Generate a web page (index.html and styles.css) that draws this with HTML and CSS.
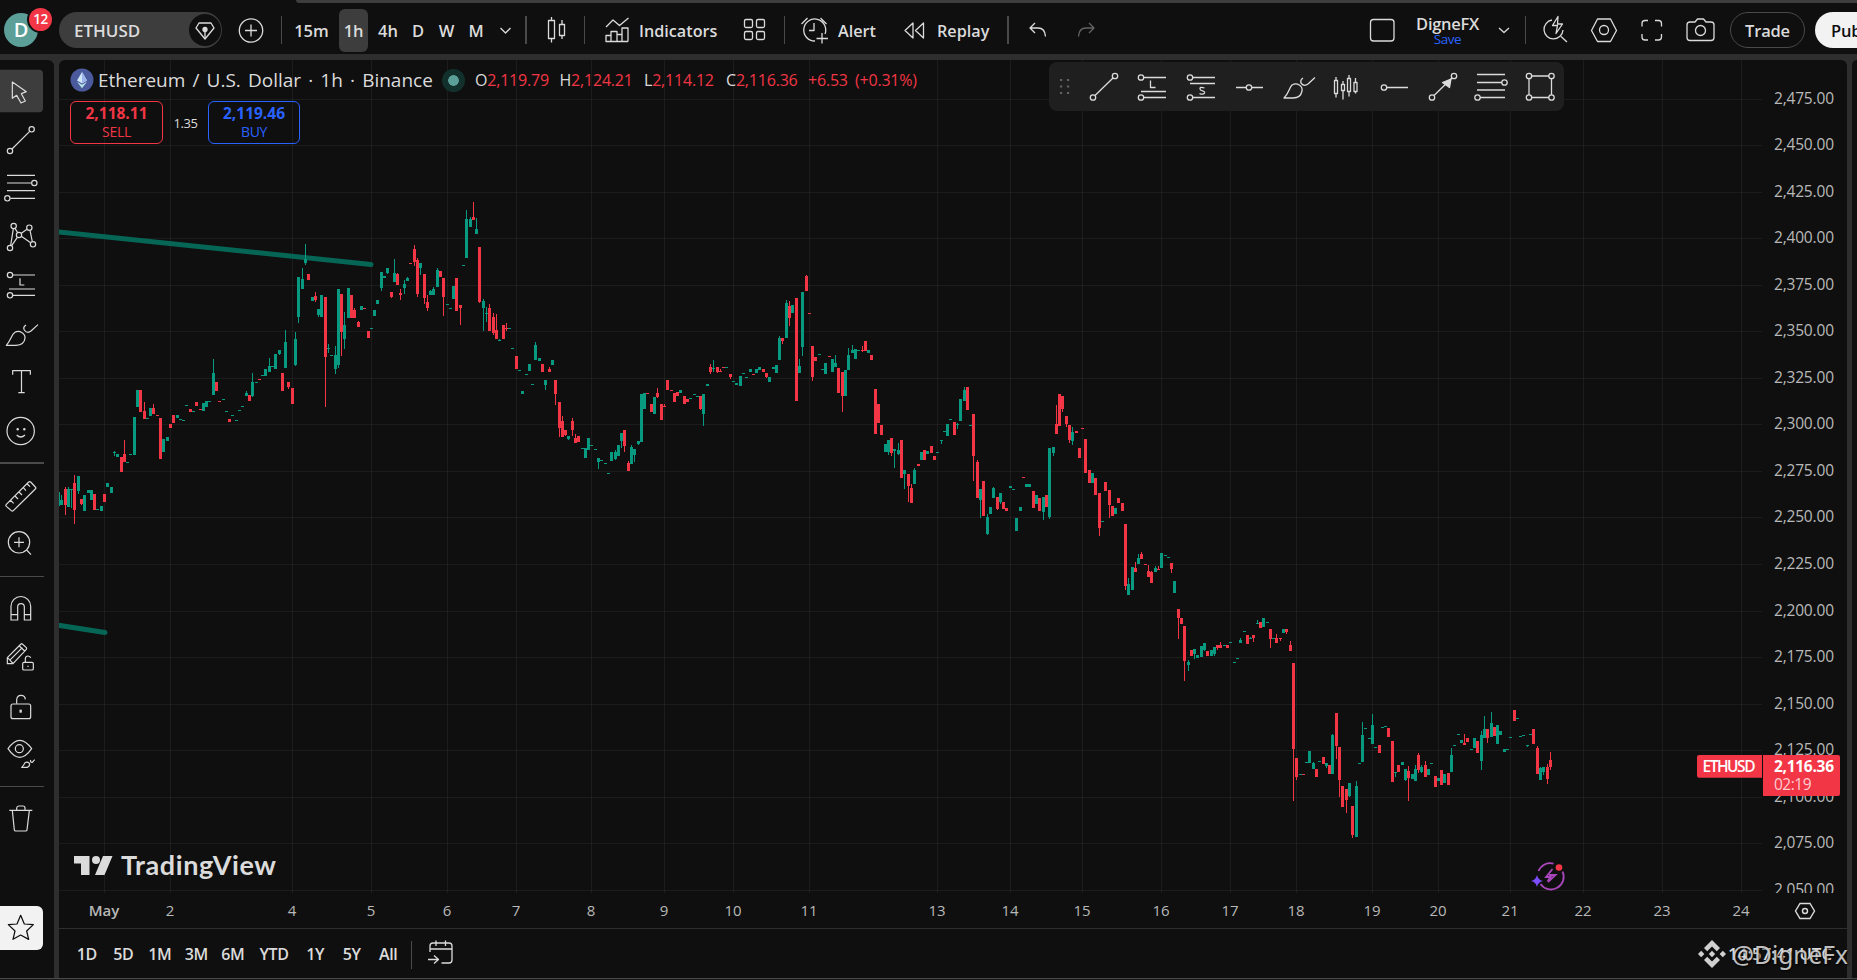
FILE: index.html
```html
<!DOCTYPE html>
<html lang="en">
<head>
<meta charset="utf-8">
<title>ETHUSD 1h</title>
<link rel="stylesheet" href="styles.css">
</head>
<body>
<div class="app">
  <div class="tabstrip"><div class="tabstrip-fill"></div></div>
  <header class="topbar">
    <div class="avatar-cell"><span class="avatar">D</span><span class="badge">12</span></div>
    <div class="symbol"><span>ETHUSD</span>
      <svg class="gem" width="32" height="32" viewBox="189 14 32 32"><circle cx="205" cy="30" r="16" class="dark"/><path d="M199 23h12l3 5-9 11-9-11z"/><path d="M205 38v-8"/><circle cx="205" cy="29.500" r="2" class="fill"/></svg>
    </div>
    <svg class="ic" width="59" height="48" viewBox="222 6 59 48"><circle cx="251" cy="30.500" r="11.700"/><path d="M251 24.500v12M245 30.500h12"/></svg>
    <i class="sep"></i>
    <span class="tf">15m</span><span class="tf active">1h</span><span class="tf">4h</span><span class="tf">D</span><span class="tf">W</span><span class="tf">M</span>
    <svg class="ic" width="36" height="48" viewBox="487 6 36 48"><path d="M500.500 28l5 5 5-5"/></svg>
    <i class="sep wide"></i>
    <svg class="ic" width="55" height="48" viewBox="529 6 55 48"><path d="M548.500 20.500h6v18h-6zM551.500 17v3.500M551.500 38.500v4M559.500 24.500h5v11h-5zM562 20v4.500M562 35.500V39"/></svg>
    <i class="sep"></i>
    <svg class="ic" width="52" height="48" viewBox="586 6 52 48"><path d="M606 41.500v-6h5v6zM611 41.500v-10h6v10M617 41.500v-7h5v7M622 41.500V28h6v13.500M606 41.500h22M606 27l7-7 6.500 5.500L628.500 18"/></svg>
    <span class="label">Indicators</span>
    <svg class="ic" width="64" height="48" viewBox="720 6 64 48"><rect x="744.500" y="19.500" width="8" height="8" rx="1.500"/><rect x="756.500" y="19.500" width="8" height="8" rx="1.500"/><rect x="744.500" y="31.500" width="8" height="8" rx="1.500"/><rect x="756.500" y="31.500" width="8" height="8" rx="1.500"/></svg>
    <i class="sep"></i>
    <svg class="ic" width="52" height="48" viewBox="785 6 52 48"><path d="M825 34a11 11 0 1 0-10 7M814 23v7.500h-5M801.500 24l6-6M820.500 18l6 6M822 33v10.500M816.500 38.500h11.500"/></svg>
    <span class="label">Alert</span>
    <svg class="ic" width="56" height="48" viewBox="880 6 56 48"><path d="M913 23v15l-8-7.500zM923.500 23v15l-8-7.500z"/></svg>
    <span class="label">Replay</span>
    <i class="sep wide"></i>
    <svg class="ic" width="53" height="48" viewBox="1009 6 53 48"><path d="M1035 23l-5 5 5 5M1030 28h8q7 0 7.500 8.500"/></svg>
    <svg class="ic dim" width="298" height="48" viewBox="1062 6 298 48"><path d="M1089 23l5 5-5 5M1094 28h-8q-7 0-7.500 8.500"/></svg>
    <svg class="ic" width="55" height="48" viewBox="1360 6 55 48"><rect x="1370.500" y="19.500" width="23.500" height="21.500" rx="3"/></svg>
    <div class="layout-name"><span>DigneFX</span><em>Save</em></div>
    <svg class="ic" width="45" height="48" viewBox="1480 6 45 48"><path d="M1499 28l5 4.500 5-4.500"/></svg>
    <i class="sep"></i>
    <svg class="ic" width="52" height="48" viewBox="1526 6 52 48"><path d="M1552 20a9.500 9.500 0 1 0 11 10M1561 36.500l6 5.500M1558 16.500l-5.500 9h5l-1.500 8 6.500-9.500h-5z"/></svg>
    <svg class="ic" width="52" height="48" viewBox="1578 6 52 48"><path d="M1597.500 19h13l6 11.500-6 11h-13l-6-11z"/><circle cx="1604" cy="30" r="4.500"/></svg>
    <svg class="ic" width="45" height="48" viewBox="1630 6 45 48"><path d="M1642 26.500v-3q0-3 3-3h3M1655 20.500h3.500q3 0 3 3v3M1661.500 34v3q0 3-3 3h-3.500M1648 40h-3q-3 0-3-3v-3"/></svg>
    <svg class="ic" width="55" height="48" viewBox="1675 6 55 48"><path d="M1690 22h5l2.500-3h6l2.500 3h5q3 0 3 3v12.500q0 3-3 3h-21q-3 0-3-3V25q0-3 3-3z"/><circle cx="1700.500" cy="30.500" r="5"/></svg>
    <button class="trade">Trade</button>
    <button class="publish">Publish</button>
  </header>

  <div class="body">
    <nav class="tools">
      <svg class="tool on" width="54" height="48.500" viewBox="0 52 162 145.500"><path class="tool-bg" d="M-20 60H117q12 0 12 12V176q0 12-12 12H-20z"/><path d="M37 97v49l13-9 13 23 13-6-12-22 15-6z"/></svg>
      <svg class="tool" width="54" height="48.500" viewBox="0 197 162 145.500"><circle cx="95" cy="237" r="8"/><circle cx="30" cy="302" r="8"/><path d="M89 243L36 296"/></svg>
      <svg class="tool" width="54" height="48.500" viewBox="0 343 162 145.500"><path d="M21 377h84M21 400h73M21 423h84M31 446h74"/><circle cx="103" cy="400" r="8"/><circle cx="22" cy="446" r="8"/></svg>
      <svg class="tool" width="54" height="48.500" viewBox="0 488 162 145.500"><circle cx="41" cy="527" r="8"/><circle cx="30" cy="593" r="8"/><circle cx="57" cy="554" r="8"/><circle cx="88" cy="532" r="8"/><circle cx="99" cy="582" r="8"/><path d="M40 535l-8 50M45 534l8 13M52 561L35 586M64 549l17-12M90 540l7 34M64 558l28 19"/></svg>
      <svg class="tool" width="54" height="48.500" viewBox="0 634 162 145.500"><circle cx="30" cy="676" r="8"/><path d="M38 676h67M27 718h78M38 737h67M60 686v20h13"/><circle cx="30" cy="737" r="8"/></svg>
      <svg class="tool" width="54" height="48.500" viewBox="0 779 162 145.500"><path d="M19 885C34 868 34 853 45 846C58 838 76 849 75 863C74 877 62 884 48 885zM78 824q-10 6-5 15 8 12 20 3l21-19"/></svg>
      <svg class="tool" width="54" height="48.500" viewBox="0 925 162 145.500"><path d="M38 975v-12h53v12M64.500 963v66M55 1029h19"/></svg>
      <svg class="tool" width="54" height="48.500" viewBox="0 1070 162 145.500"><circle cx="62" cy="1142" r="41"/><path d="M50 1154q12 12 25 0"/><circle class="fill" cx="53" cy="1137" r="2"/><circle class="fill" cx="73" cy="1137" r="2"/></svg>
      <i class="rule thick"></i>
      <svg class="tool" width="54" height="48.500" viewBox="0 1265 162 145.500"><path d="M19 1362L86 1295q3-3 6 0l14 15q3 3 0 6l-66 65q-3 3-6 0l-15-13q-3-3 0-6zM32 1350l9 9M45 1337l9 9M57 1325l9 9M70 1312l8 9M82 1301l8 8"/></svg>
      <svg class="tool" width="54" height="48.500" viewBox="0 118 162 145.500"><circle cx="57" cy="185" r="32"/><path d="M42 185h30M57 170v30M80 208l13 14"/></svg>
      <i class="rule"></i>
      <svg class="tool" width="54" height="48.500" viewBox="0 314 162 145.500"><path d="M33 419V378a29 29 0 0 1 59 0V419H73V380a10 10 0 0 0-20 0V419zM33 403h20M73 403h19"/></svg>
      <svg class="tool" width="54" height="48.500" viewBox="0 460 162 145.500"><path d="M22 552v-18L63 493q2-2 4 0l12 11q2 3 0 5L39 552zM22 533l17 18M58 499l16 15M31 540l36-36"/><rect x="68" y="548" width="32" height="23" rx="4"/><path d="M76 547v-10q1-8 8-8 7 0 8 6M84 558v4"/></svg>
      <svg class="tool" width="54" height="48.500" viewBox="0 605 162 145.500"><rect x="33" y="671" width="59" height="44" rx="6"/><path d="M50 670v-11q1-14 13-14 12 0 13 12"/><path d="M62 688v9" class="bold"/></svg>
      <svg class="tool" width="54" height="48.500" viewBox="0 750 162 145.500"><path d="M24 806Q59 756 95 806Q59 858 24 806z"/><circle cx="58" cy="806" r="12"/><path d="M65 862q8-8 10-14 8-4 13 2 3 8-6 12zM92 840q-2 8 5 7l7-8"/></svg>
      <i class="rule"></i>
      <svg class="tool" width="54" height="48.500" viewBox="0 946 162 145.500"><path d="M28 992h69M37 993l6 58q1 3 4 3h30q3 0 4-3l7-58M50 991v-6q1-6 6-6h13q6 0 6 6v6"/></svg>
      <div class="fav"><svg width="44" height="44" viewBox="0 1277 132 132"><path d="M62 1305l11 26 27 2-20 19 6 25-24-13-23 13 6-25-20-19 26-2z"/></svg></div>
    </nav>

    <main class="panel">
      <section class="chart-area">
        <svg id="chart" class="chart" width="1788" height="868" viewBox="59 60 1788 868">
          <g id="grid" class="grid"></g>
          <g class="trend"><path d="M50 231L371 264.500"/><path d="M50 624L105 632.500"/></g>
          <g id="candles" shape-rendering="crispEdges"></g>
          <g class="brand"><path d="M74 856h15.500v19H81v-11.500h-7zM103 856h9.500l-8 19h-9.500z"/><circle cx="96" cy="860" r="4"/><text x="121" y="875" textLength="155">TradingView</text></g>
          <g class="spark" transform="translate(0 -1)"><path d="M1553.500 864.600A12.700 12.700 0 0 0 1538.500 872M1562.500 872.500A12.700 12.700 0 0 1 1540.500 885"/><path d="M1552.500 870l-6.500 8h4.500l-3 4.500M1549 876h6.500l-7.500 7"/><circle cx="1559" cy="868.500" r="3.300"/><path class="star" d="M1537 876q1 5 6 6-5 1-6 6-1-5-6-6 5-1 6-6z"/></g>
          <g id="price-labels" class="axis"></g>
          <g id="time-labels" class="axis mid"></g>
          <path class="gear" d="M1800 903.500h10l4.500 7.500-4.500 7.500h-10l-4.500-7.500z"/><circle class="gear" cx="1805" cy="911" r="2.500"/>
          <g class="tag"><path d="M1699 755h63v22.700h-63q-2 0-2-2V757q0-2 2-2zM1763 755h75q2 0 2 2v37q0 2-2 2h-75z"/>
            <text x="1702.500" y="772" textLength="53">ETHUSD</text><text x="1774" y="771.500" textLength="60" class="b">2,116.36</text><text x="1774" y="789.500" textLength="37.500" class="soft">02:19</text></g>
        </svg>
        <div class="legend">
          <svg width="24" height="24" viewBox="0 0 24 24"><circle cx="12" cy="12" r="11.500" fill="#4a5a9c"/><path d="M12 4l5 8.500-5 3-5-3z" fill="#cfe6f5"/><path d="M12 4l5 8.500-5 3z" fill="#9db4ee"/><path d="M7 13.800l5 3 5-3-5 6.400z" fill="#b5e4ea"/></svg>
          <span class="title">Ethereum / U.S. Dollar · 1h · Binance</span>
          <span class="status"></span>
          <span class="ohlc">O<b>2,119.79</b></span><span class="ohlc">H<b>2,124.21</b></span><span class="ohlc">L<b>2,114.12</b></span><span class="ohlc">C<b>2,116.36</b></span><span class="ohlc chg"><b>+6.53</b></span><span class="ohlc"><b>(+0.31%)</b></span>
        </div>
        <div class="quotes">
          <div class="quote sell"><b>2,118.11</b><span>SELL</span></div>
          <span class="spread">1.35</span>
          <div class="quote buy"><b>2,119.46</b><span>BUY</span></div>
        </div>
        <svg class="favbar" width="515" height="49" viewBox="1049 62 515 49">
          <g class="dots"><path d="M1060 80h2.200M1067 80h2.200M1060 86.500h2.200M1067 86.500h2.200M1060 93h2.200M1067 93h2.200"/></g>
          <circle cx="1115" cy="76" r="2.700"/><circle cx="1093" cy="97.500" r="2.700"/><path d="M1113 78l-18 17.500"/>
          <circle cx="1141" cy="77.500" r="2.700"/><circle cx="1141" cy="97.500" r="2.700"/><path d="M1144 77.500h22M1141 91.500h25M1144 97.500h22M1150.500 80.500v7h5"/>
          <circle cx="1190" cy="77.500" r="2.700"/><circle cx="1190" cy="97.500" r="2.700"/><path d="M1193 77.500h22M1190 83.500h25M1193 97.500h22M1204.500 88q-5-1.500-4.500 1 .2 1.500 2.500 1.800 2.500.5 2 2.200-1 2-5 .6"/>
          <circle cx="1249" cy="87.500" r="2.700"/><path d="M1236 87.500h10.500M1252 87.500h11"/>
          <path d="M1284 98C1289 93 1289 88 1292 85C1297 82 1303 86 1302 91C1301 96 1298 98 1293 98zM1303 78q-3 2-2 5 3 4 7 1l7-6.500"/>
          <path d="M1334.500 80.500h3v13h-3zM1336 77v3.500M1336 93.500v4M1341.500 84.500h3v6h-3zM1343 81v3.500M1343 90.500v9M1347.500 78.500h3v13h-3zM1349 75v3.500M1349 91.500v5M1354 82.500h3v9h-3zM1355.500 78v4.500M1355.500 91.500v2"/>
          <circle cx="1384" cy="87.500" r="2.700"/><path d="M1387 87.500h21"/>
          <circle cx="1454" cy="76" r="2.700"/><circle cx="1432" cy="97.500" r="2.700"/><path d="M1434 95.500l18-17.500"/><path class="fill" d="M1451 79l-1.500 8.500-7-5z"/>
          <path d="M1477 74.500h28M1477 82.500h25M1477 90h28M1480 97.500h25"/><circle cx="1504.500" cy="82.500" r="2.700"/><circle cx="1477.500" cy="97.500" r="2.700"/>
          <path d="M1532 76h17M1532 97.500h17M1529 79v16M1551.500 79v16"/><circle cx="1529" cy="76" r="2.700"/><circle cx="1551.500" cy="76" r="2.700"/><circle cx="1529" cy="97.500" r="2.700"/><circle cx="1551.500" cy="97.500" r="2.700"/>
        </svg>
      </section>
      <footer class="bottom">
        <span class="r">1D</span><span class="r">5D</span><span class="r">1M</span><span class="r">3M</span><span class="r">6M</span><span class="r ytd">YTD</span><span class="r">1Y</span><span class="r">5Y</span><span class="r">All</span>
        <i class="sep"></i>
        <svg class="ic" width="60" height="40" viewBox="412 934 60 40"><path d="M430 952v-6q0-3 3-3h16q3 0 3 3v14q0 3-3 3h-7.500M430 949h22M436 940.500v5.500M445.500 940.500v5.500M428 959.500h10M434 955.500l4.500 4-4.500 4"/></svg>
        <div class="clock">14:57:41 UTC</div>
        <div class="mark"><svg width="28" height="28" viewBox="0 0 28 28"><path d="M14 0l8 8-3.200 3.200L14 6.400l-4.800 4.800L6 8zM14 28l-8-8 3.200-3.200 4.800 4.800 4.800-4.800L22 20zM14 10.800l3.200 3.200-3.200 3.200-3.200-3.200zM3.200 10.800L6.400 14l-3.200 3.200L0 14zM24.800 10.800L28 14l-3.200 3.200-3.200-3.200z"/></svg><span>@DigneFx</span></div>
      </footer>
    </main>
    <aside class="rail"></aside>
  </div>
  <div class="base"></div>
</div>
<script src="chart.js"></script>
</body>
</html>
```
FILE: styles.css
```css
* { box-sizing: border-box; }
html, body { margin: 0; height: 100%; overflow: hidden; }
body { background: #2e2e2e; color: #dbdbdb; font-family: "Open Sans", "Noto Sans", sans-serif; font-size: 16px; }
svg { display: block; flex: none; }
.app { width: 1857px; height: 980px; display: flex; flex-direction: column; overflow: hidden; }

.tabstrip { height: 3px; background: #0f0f0f; flex: none; }
.tabstrip-fill { margin-left: 296px; height: 3px; background: #3d3d3d; border-bottom-left-radius: 4px; }
.topbar { height: 51px; flex: none; background: #0f0f0f; display: flex; align-items: center; font-weight: 600; overflow: hidden; }
.topbar > * { flex: none; }
.ic, .gem, .favbar, .tool, .fav svg { fill: none; stroke: #dbdbdb; stroke-width: 1.3; stroke-linejoin: round; }
.topbar .ic { margin-bottom: -3px; margin-top: 0; }
.topbar .dim { stroke: #636363; }
.fill { fill: #dbdbdb; }
.avatar-cell { width: 59px; height: 51px; position: relative; display: flex; align-items: center; padding: 3px 0 0 4px; }
.avatar { width: 34px; height: 34px; border-radius: 50%; background: #5b9f98; color: #fff; font-size: 20px; line-height: 34px; text-align: center; }
.badge { position: absolute; left: 29px; top: 5px; width: 23px; height: 23px; border-radius: 50%; background: #f23645; color: #fff; font-size: 13.5px; line-height: 22px; text-align: center; box-shadow: 0 0 0 2px #0f0f0f; letter-spacing: -.5px; }
.symbol { width: 163px; height: 36px; margin-top: 3px; border-radius: 18px; background: #3d3d3d; display: flex; align-items: center; justify-content: space-between; padding: 0 1px 0 15px; font-size: 17px; }
.dark { fill: #0f0f0f; stroke: none; }
.sep { width: 1px; height: 28px; margin-top: 3px; background: #4a4a4a; }
.sep.wide { width: 2px; }
.tf { height: 43px; margin-top: 4px; line-height: 43px; text-align: center; border-radius: 6px; width: 40px; font-size: 16.5px; }
.topbar > .sep + .tf { width: 57px; padding-left: 2px; }
.topbar > .tf.active { width: 29px; background: #3d3d3d; letter-spacing: -.2px; }
.topbar > span:nth-child(8) { width: 20px; }
.topbar > span:nth-child(9) { width: 37px; }
.topbar > span:nth-child(10) { width: 22px; }
.topbar > .sep:nth-child(12) { margin-left: 2px; margin-right: 2px; }
.topbar > .sep:nth-child(14) { margin-right: 1px; }
.label { margin-top: 4px; padding-left: 1px; font-size: 16.2px; }
.topbar > .label:nth-child(16) { width: 82px; }
.topbar > .label:nth-child(20) { width: 43px; }
.topbar > .label:nth-child(22) { width: 71px; }
.layout-name { width: 65px; display: flex; flex-direction: column; align-items: center; margin-top: 3px; line-height: 18px; font-size: 16.5px; letter-spacing: -.3px; }
.layout-name em { font-style: normal; font-weight: 400; font-size: 13.5px; line-height: 13px; color: #2962ff; letter-spacing: -.4px; }
button { font: 600 16.5px "Open Sans", sans-serif; height: 36px; border-radius: 18px; margin: 3px 0 0; letter-spacing: -.2px; }
.trade { width: 75px; padding: 0; color: #dbdbdb; background: none; border: 1px solid #4a4a4a; }
.publish { width: 90px; margin-left: 10px; padding: 0 0 0 16px; text-align: left; border: 0; background: #f2f2f2; color: #0f0f0f; }

.body { flex: 1; display: flex; padding-top: 6px; gap: 5px; min-height: 0; }
.tools { width: 54px; flex: none; background: #0f0f0f; border-top-right-radius: 6px; padding-top: 7.25px; overflow: hidden; display: flex; flex-direction: column; }
.tool { stroke-width: 3.6; flex: none; }
.tool .bold { stroke-width: 7; }
.tool .tool-bg { fill: #3d3d3d; stroke: none; }
.rule { width: 44px; height: 1px; background: #4a4a4a; flex: none; margin: 7.5px 0 8px; }
.rule.thick { height: 2px; margin: 7px 0 8px; }
.rule + .tool { margin-top: -.5px; }
.fav { width: 43px; height: 44px; margin-top: 63px; background: #f2f2f2; border-radius: 0 6px 6px 0; flex: none; }
.fav svg { stroke: #0f0f0f; stroke-width: 3.7; }

.panel { width: 1788px; flex: none; background: #0f0f0f; border-radius: 6px 6px 0 0; display: flex; flex-direction: column; }
.chart-area { height: 868px; flex: none; position: relative; }
.chart { position: absolute; left: 0; top: 0; }
.grid { fill: rgba(242, 242, 242, .06); shape-rendering: crispEdges; }
.trend { fill: none; stroke: #056656; stroke-width: 5; stroke-linecap: round; }
.up { fill: #089981; }
.down { fill: #f23645; }
.brand { fill: #dbdbdb; }
.brand text { font: 700 27px Lato, "Open Sans", sans-serif; }
.spark { fill: none; stroke: #ab47bc; stroke-width: 1.8; }
.spark circle { fill: #f23645; stroke: none; }
.spark .star { fill: #7b4dff; stroke: none; }
.axis { fill: #b8b8b8; font-size: 15.5px; }
.axis.mid { text-anchor: middle; font-size: 15px; }
.axis .month { font-weight: 600; }
.gear { fill: none; stroke: #dbdbdb; stroke-width: 1.4; }
.tag { fill: #f23645; }
.tag text { fill: #fff; font-size: 15.5px; font-weight: 600; }
.tag .b { font-weight: 700; }
.tag .soft { font-weight: 400; fill: #fccdd1; }

.legend { position: relative; display: flex; align-items: center; height: 24px; padding-left: 11px; margin-top: 8px; }
.title { font-size: 19px; line-height: 24px; font-weight: 500; margin-left: 4px; width: 334px; white-space: nowrap; word-spacing: 2.2px; }
.status { width: 23px; height: 23px; margin: 0 10px 0 10px; border-radius: 50%; background: radial-gradient(circle, #5b9f98 5px, #12302c 5.6px); flex: none; }
.ohlc { width: 84.500px; white-space: nowrap; font-weight: 500; letter-spacing: -.2px; }
.ohlc b { color: #f23645; font-weight: 400; }
.ohlc:nth-child(6), .ohlc:nth-child(7) { width: 82px; }
.ohlc.chg { width: 47px; }
.quotes { position: relative; display: flex; align-items: center; padding-left: 11px; margin-top: 9px; }
.quote { width: 93px; height: 43px; border: 1.5px solid; border-radius: 6px; display: flex; flex-direction: column; align-items: center; line-height: 19px; padding-top: 2px; font-size: 15.5px; }
.quote span { font-size: 14px; line-height: 17px; letter-spacing: -.3px; }
.sell { color: #f23645; }
.buy { color: #2962ff; width: 92px; }
.spread { width: 45px; text-align: center; font-size: 13px; letter-spacing: -.4px; }
.favbar { position: absolute; left: 990px; top: 2px; background: #1f1f1f; border-radius: 8px; }
.dots { stroke: #636363; stroke-width: 2.2; }

.bottom { flex: 1; border-top: 1px solid #2e2e2e; display: flex; align-items: center; position: relative; padding-left: 9.5px; font-weight: 600; }
.r { width: 36.500px; text-align: center; letter-spacing: -.4px; margin-top: 0; font-size: 16px; }
.ytd { width: 46px; }
.bottom .sep { margin: 2px 0 0 4.5px; }
.clock { margin-left: auto; width: 119px; font-size: 17px; letter-spacing: -.1px; color: #dbdbdb; margin-top: -1px; white-space: nowrap; }
.mark { position: absolute; left: 1639px; top: 6px; display: flex; align-items: center; gap: 6px; height: 38px; font: 400 24.5px "Noto Sans", sans-serif; color: rgba(226, 226, 226, .85); text-shadow: 1px 1px 2px #000; }
.mark svg { fill: #d0d0d0; }
.rail { flex: 1; background: #0f0f0f; border-top-left-radius: 6px; }
.base { height: 2px; background: #1a1a1a; border-top: 1px solid #4a4a4a; flex: none; }
```
FILE: chart.js
```js
const NS = "http://www.w3.org/2000/svg";
const add = (parent, name, attrs, text) => {
  const el = document.createElementNS(NS, name);
  for (const k in attrs) el.setAttribute(k, attrs[k]);
  if (text) el.textContent = text;
  parent.appendChild(el);
};
const $ = id => document.getElementById(id);

// Grid lines and axis labels
const days = [["May",104],["2",170],["4",292],["5",371],["6",447],["7",516],["8",591],["9",664],["10",733],["11",809],["13",937],["14",1010],["15",1082],["16",1161],["17",1230],["18",1296],["19",1372],["20",1438],["21",1510],["22",1583],["23",1662],["24",1741]];
const rows = [99,145,192,238,285,331,378,424,471,517,564,611,657,704,750,797,843,890];
for (const [label, x] of days) {
  add($("grid"), "rect", { x, y: 60, width: 1, height: 833 });
  add($("time-labels"), "text", { x: x, y: 916, class: label === "May" ? "month" : "day" }, label);
}
rows.forEach((y, i) => {
  add($("grid"), "rect", { x: 59, y, width: 1703, height: 1 });
  const price = (2475 - i * 25).toFixed(2).replace(/^(\d)/, "$1,");
  add($("price-labels"), "text", { x: 1774, y: y + 4.5, textLength: 60 }, price);
});
add($("price-labels"), "rect", { x: 1763, y: 893, width: 80, height: 6, fill: "#0f0f0f" });

// Candles: direction, centre, body top, body bottom, wick top, wick bottom (thirds of a pixel from the origin)
const series = [
  { ox: 50, oy: 190, data: `g 34 930 945 915 945;r 46 897 945 891 975;g 55 897 951 891 951;g 64 897 900 897 954;r 73 879 960 855 1002;g 85 858 903 858 912;r 94 927 942 927 945;g 103 915 963;g 115 900 909;g 124 900 930;r 133 912 960;g 142 957 960;g 154 948 963;r 163 912 936;g 172 879 891;g 184 891 909;g 193 786 789 783 798;g 202 792 801;r 214 801 846;r 223 792 816 750 816;g 232 816 819;g 241 792 795;g 253 681 795;g 262 600 651;r 271 600 666;r 283 663 687 636 687;g 292 684 687;g 301 654 678;r 310 654 672 642 672;r 322 675 678;r 331 684 807;g 340 747 786;g 352 741 753;r 361 702 714;r 370 675 699;g 382 675 684;g 391 687 690;g 400 690 693;g 409 645 648;r 421 657 666;g 430 663 666;r 439 636 648;r 451 657 660;g 460 639 663;g 469 633 651;g 478 633 636;g 490 549 615 507 615;r 499 576 603;r 508 633 636;g 520 627 630;g 529 663 666;r 538 687 696;g 547 675 678;g 559 690 693;g 568 660 663;g 577 648 651;g 589 609 618 603 618;r 598 615 633;g 607 576 618 549 621;g 619 576 579;r 628 567 570;g 637 555 558;g 646 537 558;g 658 528 546 504 546;g 667 528 531;g 676 492 537;g 688 480 492 480 495;r 697 549 603;g 706 456 534 420 534;r 715 576 591 576 597;r 727 594 642;g 736 447 525 426 528;g 745 261 381 261 399;g 757 267 297 234 297;g 766 207 219 162 225;r 775 252 270;g 787 321 333;r 796 318 330 306 336;g 805 357 375 357 381;g 814 315 381;r 826 321 501 321 651;g 835 474 477 462 489;g 844 495 498;g 856 495 537 468 552;g 865 297 525 297 534;r 874 312 426 312 498;g 883 405 447 366 477;g 895 294 384;r 904 315 384;r 913 360 384 354 384;r 925 396 411 393 411;g 934 348 360;r 943 354 357;r 955 423 444;g 964 414 417;g 973 360 378;g 982 330 342;g 994 246 294 246 303;g 1003 258 264;g 1012 234 249 234 252;r 1024 306 321 306 324;g 1033 249 276 207 276;r 1042 252 285 249 285;r 1051 309 315 297 330;g 1063 282 294 270 312;g 1072 264 273 261 273;r 1081 219 222;r 1093 177 216 165 228;r 1102 210 312 204 321;g 1111 219 234 219 255;r 1123 252 324 252 342;r 1132 336 354 315 363;g 1141 303 315 300 315;g 1150 297 315 291 315;g 1162 240 291 234 291;r 1171 243 261;r 1180 264 321 264 378;g 1192 342 345;g 1201 354 357` },
  { ox: 450, oy: 190, data: `g 10 288 327;r 19 264 363;r 31 345 354 345 405;g 40 225 228;g 49 87 204 60 204;g 61 87 111 81 111;r 70 81 90 36 90;g 79 117 132 84 132;r 88 171 336 171 339;g 100 333 354 327 423;g 109 369 372 351 396;r 118 354 423 342 423;r 130 381 429 369 435;r 139 420 447 372 447;g 148 450 453 447 453;r 160 405 447;r 169 414 417 399 423;g 178 414 417;g 187 474 477;r 199 498 537;g 208 540 543;g 217 603 612;g 229 552 555;g 238 522 543;g 247 582 585;g 256 465 510 456 510;g 268 504 513;r 277 522 546;g 286 570 585 570 600;r 298 537 546 531 546;g 307 510 525;r 316 570 612 570 645;r 328 636 714 636 741;r 337 693 741 678 741;r 346 720 735 720 738;g 355 738 747 738 750;r 367 693 720 684 738;r 376 744 759 732 759;r 385 738 756;g 397 774 777;g 406 774 804;g 415 744 780;g 424 765 768;g 436 777 780;g 445 804 816 804 837;g 454 810 813;g 466 819 822;g 475 849 852;g 484 786 813;g 496 786 807 780 810;g 505 765 798;g 514 729 753 729 774;r 523 720 768 720 786;r 535 819 843 813 843;g 544 771 822 765 822;g 553 777 795 777 816;g 565 753 762 753 765;g 574 612 756;g 583 609 657;r 592 609 612;r 604 642 666;g 613 621 672;r 622 609 621 594 624;r 634 642 690;r 643 648 651 642 651;r 652 570 600;r 664 600 603;r 673 609 636;r 682 606 618;g 691 600 609;r 703 618 642;r 712 627 636;g 721 624 627;g 733 612 615;g 742 618 621;r 751 618 657 618 660;g 760 612 672 612 708;g 772 582 588;r 781 531 546 522 552;g 790 534 537 510 546;r 802 531 546 531 549;r 811 543 546 537 546;r 820 531 534;g 829 531 534;r 841 552 561 552 567;g 850 573 576;g 859 579 585;g 871 558 588;g 880 549 552;g 889 561 564;g 901 537 546;r 910 552 555;g 919 537 549;g 928 531 540;r 940 537 546;r 949 549 561 549 564;g 958 561 576;g 970 531 537;g 979 525 549;g 988 444 510 438 510;r 997 444 453 444 462;g 1009 339 444 330 444;r 1018 348 384 333 408;g 1027 345 369;r 1039 324 633;g 1048 528 549 507 549;g 1057 306 471 306 498;r 1069 258 303 255 303;r 1078 369 372;r 1087 468 561 468 573;r 1096 501 513;g 1108 492 495;g 1117 537 540;g 1126 519 552;r 1138 498 501;g 1147 507 546;g 1156 519 531 495 531;r 1165 534 609;r 1177 546 618 546 666;g 1186 540 618;g 1195 495 540 474 540` },
  { ox: 850, oy: 320, data: `g 7 90 99 75 99;g 16 87 117;g 25 90 93;r 37 90 93 78 96;r 46 63 93;g 55 90 99;r 64 105 120;r 76 207 342;r 85 252 309;r 94 315 345;g 106 372 396;g 115 360 396 360 405;r 124 354 399 354 408;g 133 387 393 387 444;g 145 390 402 369 405;r 154 360 474;g 163 450 462 450 507;r 175 462 498 462 546;r 184 504 549 492 549;g 193 450 492 444 492;r 205 432 438;g 214 396 420;r 223 390 420;g 232 393 402;r 244 378 399;r 253 408 420;g 262 396 399;g 274 360 363 360 372;g 283 333 336;g 292 312 348;g 301 297 300;r 313 306 345;g 322 312 315 309 327;g 331 237 303;g 343 210 243 201 243;r 352 201 270;g 361 315 318;r 370 282 408 282 483;r 382 426 534 420 534;g 391 507 540 507 594;r 400 483 588;g 412 591 642 582 645;g 421 561 582;g 430 504 534 501 534;r 442 531 567 531 570;g 451 519 546 519 552;r 460 546 567;r 469 564 573;g 481 498 504;g 490 507 510;g 499 594 633;g 511 561 573;r 520 471 474;g 529 492 501;g 538 492 501;r 550 513 564;g 559 525 552;r 568 534 573;g 580 531 576 531 600;r 589 525 561;g 598 384 591 384 597;g 610 381 399 381 408;r 619 312 342 255 342;r 628 222 318;r 637 228 267 228 276;r 649 288 312 288 321;r 658 315 360 315 369;g 667 336 363 321 375;r 679 333 339;r 688 384 414;r 697 324 327;r 706 357 459;r 718 450 489;g 727 459 489;r 736 474 525;r 748 519 624 519 648;g 757 603 606;r 766 486 513;r 778 510 555 510 594;r 787 558 588;g 796 564 582;r 805 534 549;r 817 549 573;r 826 612 798 612 810;g 835 792 825 774 825;g 847 741 810;r 856 744 756 726 756;g 865 714 732 702 732;r 874 702 717 696 717;r 886 732 735;r 895 753 771 735 771;r 904 756 789 753 789;g 916 744 756 738 756;r 925 747 750 738 750;g 934 699 744;g 946 705 708;g 955 711 714;r 964 729 747 729 759;g 973 783 819;r 985 867 894 867 957;r 994 894 912;r 1003 918 1023 918 1083;g 1015 1026 1035 1020 1053` },
  { ox: 1150, oy: 540, data: `r 124 330 348;g 133 327 342 327 357;g 142 345 354;g 154 318 351;g 163 309 330 309 333;r 172 333 348;g 184 330 348;g 193 321 342 321 348;r 202 315 324 315 330;r 211 315 324 306 324;g 223 315 318;r 232 315 324;g 241 306 309;g 253 366 369;g 262 354 357;g 271 300 309 294 309;g 283 273 276;r 292 285 312;g 301 294 297 291 297;r 310 285 294 285 306;g 322 249 252 240 252;r 331 246 264;g 340 234 261;g 352 246 249;r 361 267 297 267 324;g 370 294 297;r 379 294 309 282 309;r 391 294 297 294 303;g 400 267 279;r 409 267 276 267 282;r 421 315 333 303 333;r 430 369 627 369 783;r 439 654 711 654 720;g 451 702 705;r 460 702 705;g 469 666 669;g 478 633 669;g 490 669 687 666 687;r 499 687 711;g 508 663 666;r 520 651 672;g 529 669 678 669 684;r 538 675 702;g 547 585 702 582 702;r 559 519 618 519 657;r 568 621 720 621 771;r 577 738 801;r 589 747 780 747 819;g 598 729 768 729 771;r 607 798 885 798 894;g 619 738 891 723 891;g 628 669 672;g 637 585 666 546 666;g 646 564 567;g 658 594 597;g 667 555 612 522 612;g 676 621 624;r 688 615 639;g 697 561 564;g 706 558 561;r 715 564 591;r 727 603 726;g 736 696 699 696 711;r 745 675 696;g 757 666 675;g 766 687 720 687 723;r 775 693 714 678 783;g 787 702 717;g 796 687 723 675 723;r 805 645 690 639 699;g 814 681 696 675 699;r 826 675 711 663 711;g 835 687 705;g 844 669 672;r 856 708 741;g 865 714 723;r 874 690 735;g 883 702 729;r 895 699 735;g 904 645 696 624 696;g 913 615 618;g 925 582 585;g 934 600 609;r 943 609 615 582 615;r 952 594 606;g 964 627 630;g 973 594 624;r 982 603 639;g 994 585 663 573 690;g 1003 567 594 528 594;r 1012 567 594 567 609;g 1024 549 591 516 591;r 1033 561 588;g 1042 555 612;g 1051 573 585;g 1063 627 636;g 1072 627 630;g 1081 591 594;r 1093 510 543;g 1102 534 537;g 1111 588 591;g 1120 585 588;g 1132 615 618 615 621;g 1141 582 585;r 1150 567 612;r 1162 624 702 618 702;g 1171 684 720 681 720;g 1180 681 696 681 705;r 1192 681 717 672 732;r 1201 660 681 636 690` }
];
const layer = $("candles");
add(layer, "rect", { x: 59, y: 492, width: 1, height: 14, class: "up" });
for (const { ox, oy, data } of series) {
  for (const item of data.split(";")) {
    const [dir, ...v] = item.split(" ");
    const n = v.map(Number);
    const x = ox + Math.floor(n[0] / 3);
    const cls = dir === "g" ? "up" : "down";
    add(layer, "rect", { x: x - 1, y: oy + n[1] / 3, width: 3, height: (n[2] - n[1]) / 3, class: cls });
    if (n.length > 3) add(layer, "rect", { x, y: oy + n[3] / 3, width: 1, height: (n[4] - n[3]) / 3, class: cls });
  }
}
```
